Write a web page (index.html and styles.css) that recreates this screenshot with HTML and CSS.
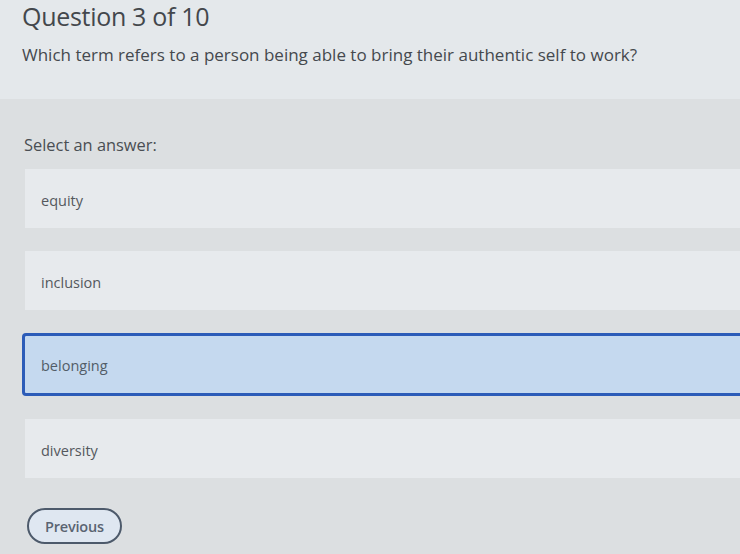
FILE: index.html
```html
<!DOCTYPE html>
<html lang="en">
<head>
<meta charset="utf-8">
<title>Question 3 of 10</title>
<link rel="stylesheet" href="styles.css">
</head>
<body>
<header class="head">
  <h1 class="title">Question 3 of 10</h1>
  <p class="question">Which term refers to a person being able to bring their authentic self to work?</p>
</header>
<main class="body">
  <p class="prompt">Select an answer:</p>
  <ul class="options">
    <li class="option">equity</li>
    <li class="option">inclusion</li>
    <li class="option selected">belonging</li>
    <li class="option">diversity</li>
  </ul>
  <button class="prev" type="button">Previous</button>
</main>
</body>
</html>
```
FILE: styles.css
```css
html, body {
  margin: 0;
  padding: 0;
  width: 740px;
  height: 554px;
  overflow: hidden;
  background: #dcdfe1;
  font-family: "Open Sans", "Noto Sans", sans-serif;
  color: #505459;
}
.head {
  background: #e4e8eb;
  padding: 2px 0 0 22px;
  height: 99px;
  box-sizing: border-box;
}
.title {
  margin: 0;
  font-size: 25px;
  font-weight: 400;
  line-height: 28px;
  color: #43474c;
  letter-spacing: -0.3px;
}
.question {
  margin: 13px 0 0 0;
  font-size: 17px;
  line-height: 24px;
  color: #45494e;
}
.body {
  padding: 35px 0 0 25px;
}
.prompt {
  margin: 0 0 0 -1px;
  font-size: 16.4px;
  line-height: 22px;
  color: #4a4e53;
}
.options {
  list-style: none;
  margin: 13px 0 0 0;
  padding: 0;
  display: flex;
  flex-direction: column;
  gap: 23px;
}
.option {
  background: #e7eaed;
  height: 59px;
  display: flex;
  align-items: center;
  padding: 4px 0 0 16px;
  box-sizing: border-box;
  font-size: 14.5px;
  color: #54585d;
}
.option.selected {
  background: #c5d9ef;
  border: 3px solid #2c5cb8;
  border-right: none;
  border-radius: 4px 0 0 4px;
  margin-left: -3px;
  padding-top: 2px;
  height: 63px;
  color: #525d68;
}
.prev {
  margin: 30px 0 0 2px;
  height: 36px;
  padding: 0 16px;
  border: 2px solid #4d5a6b;
  border-radius: 18px;
  background: #dfe7f1;
  font-family: "Open Sans", "Noto Sans", sans-serif;
  font-size: 14.5px;
  font-weight: 600;
  color: #5a6472;
  letter-spacing: -0.2px;
}
```
